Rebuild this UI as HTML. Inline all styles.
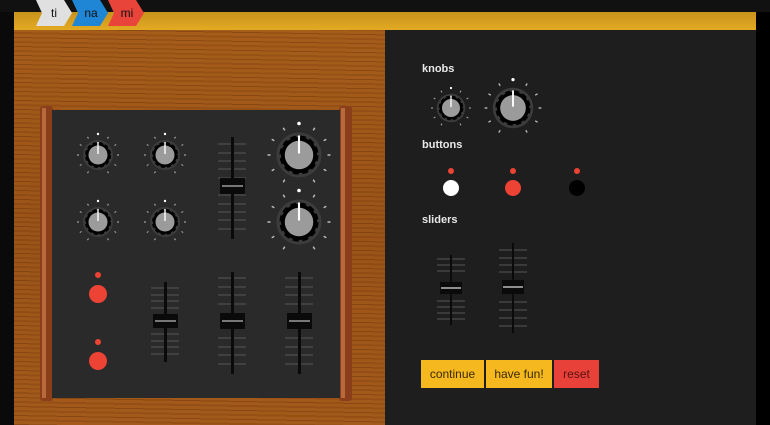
<!DOCTYPE html>
<html><head><style>
body{margin:0;width:770px;height:425px;overflow:hidden;background:#111;font-family:"Liberation Sans",sans-serif;position:relative}
.wood{position:absolute;left:14px;top:30px;width:371px;height:395px;background:
repeating-linear-gradient(1deg,rgba(70,25,0,.28) 0 1px,transparent 1px 4px,rgba(90,35,5,.18) 4px 6px,transparent 6px 9px),
linear-gradient(180deg,#a65d1a,#9a5318 50%,#a35a1a)}
.dark{position:absolute;left:385px;top:30px;width:371px;height:395px;background:#1e1e1e}
.yb{position:absolute;left:14px;top:12px;width:742px;height:18px;background:linear-gradient(180deg,#c8921c,#e3aa22)}
.lab{position:absolute;color:#e8e8e8;font-size:11px;font-weight:bold}
.btn{position:absolute;top:360px;height:28px;font-size:12px;color:#3a2a05;display:flex;align-items:center;justify-content:center}
</style></head><body>
<div class="yb"></div>
<div class="wood"></div>
<div class="dark"></div>
<svg width="770" height="425" style="position:absolute;left:0;top:0">
<defs>
<g id="k">
<circle r="15" fill="#3c3c3c"/>
<circle r="12" fill="#000"/>
<circle r="12.3" fill="none" stroke="#000" stroke-width="1.5" stroke-dasharray="4 2.5"/>
<circle r="9.5" fill="#9b9b9b"/>
<line x1="0" y1="-1" x2="0" y2="-13" stroke="#fff" stroke-width="1.4"/>
<circle cy="-21" r="1.2" fill="#fff"/>
<g stroke="#bbb" stroke-width="1">
<line y1="-19" y2="-21" transform="rotate(30)"/><line y1="-19" y2="-21" transform="rotate(60)"/><line y1="-19" y2="-21" transform="rotate(90)"/><line y1="-19" y2="-21" transform="rotate(120)"/><line y1="-19" y2="-21" transform="rotate(150)"/>
<line y1="-19" y2="-21" transform="rotate(-30)"/><line y1="-19" y2="-21" transform="rotate(-60)"/><line y1="-19" y2="-21" transform="rotate(-90)"/><line y1="-19" y2="-21" transform="rotate(-120)"/><line y1="-19" y2="-21" transform="rotate(-150)"/>
</g></g>
</defs>
<!-- tabs -->
<polygon points="36,0 64,0 72,13 64,26 36,26 42,13" fill="#e0e0e0"/>
<polygon points="72,0 100,0 108,13 100,26 72,26 78,13" fill="#1f86d6"/>
<polygon points="108,0 136,0 144,13 136,26 108,26 114,13" fill="#e8443a"/>
<text x="54" y="17" font-size="12" text-anchor="middle" fill="#111" font-family="Liberation Sans">ti</text>
<text x="91" y="17" font-size="12" text-anchor="middle" fill="#111" font-family="Liberation Sans">na</text>
<text x="127" y="17" font-size="12" text-anchor="middle" fill="#111" font-family="Liberation Sans">mi</text>
<!-- mixer -->
<rect x="40" y="106" width="13" height="295" rx="3" fill="#8a3f1a"/>
<rect x="339" y="106" width="13" height="295" rx="3" fill="#8a3f1a"/>
<rect x="42" y="108" width="4" height="290" fill="#b86a3c"/>
<rect x="341" y="108" width="4" height="290" fill="#b86a3c"/>
<rect x="52" y="110" width="288" height="288" fill="#2a2a2a"/>
<use href="#k" x="98" y="155"/><use href="#k" x="165" y="155"/>
<use href="#k" x="98" y="222"/><use href="#k" x="165" y="222"/>
<use href="#k" transform="translate(299,155) scale(1.5)"/>
<use href="#k" transform="translate(299,222) scale(1.5)"/>
<g stroke="#555" stroke-width="1">
<path d="M218 144h28M218 153h28M218 161h28M218 169h28M218 178h28M218 195h28M218 204h28M218 212h28M218 220h28M218 229h28"/>
<path d="M151 288h28M151 295h28M151 301h28M151 308h28M151 334h28M151 341h28M151 347h28M151 354h28"/>
<path d="M218 278h28M218 287h28M218 295h28M218 304h28M218 338h28M218 347h28M218 355h28M218 364h28"/>
<path d="M285 278h28M285 287h28M285 295h28M285 304h28M285 338h28M285 347h28M285 355h28M285 364h28"/>
</g>
<g fill="#0a0a0a">
<rect x="231" y="137" width="3" height="102"/><rect x="220" y="178" width="25" height="16"/>
<rect x="164" y="282" width="3" height="80"/><rect x="153" y="314" width="25" height="14"/>
<rect x="231" y="272" width="3" height="102"/><rect x="220" y="313" width="25" height="16"/>
<rect x="298" y="272" width="3" height="102"/><rect x="287" y="313" width="25" height="16"/>
</g>
<g stroke="#bbb" stroke-width="1.2"><path d="M222 186h21M155 321h21M222 321h21M289 321h21"/></g>
<g fill="#ec4335"><circle cx="98" cy="275" r="3"/><circle cx="98" cy="294" r="9"/><circle cx="98" cy="342" r="3"/><circle cx="98" cy="361" r="9"/></g>
<!-- right -->
<use href="#k" transform="translate(451,108) scale(0.95)"/>
<use href="#k" transform="translate(513,108) scale(1.35)"/>
<g fill="#ec4335"><circle cx="451" cy="171" r="3"/><circle cx="513" cy="171" r="3"/><circle cx="577" cy="171" r="3"/><circle cx="513" cy="188" r="8"/></g>
<circle cx="451" cy="188" r="8" fill="#fff"/><circle cx="577" cy="188" r="8" fill="#000"/>
<g stroke="#555" stroke-width="1">
<path d="M437 259h28M437 265h28M437 271h28M437 301h28M437 307h28M437 313h28M437 319h28"/>
<path d="M499 250h28M499 258h28M499 265h28M499 272h28M499 302h28M499 310h28M499 318h28M499 326h28"/>
</g>
<g fill="#0a0a0a"><rect x="450" y="255" width="2" height="70"/><rect x="440" y="282" width="22" height="12"/>
<rect x="512" y="243" width="2" height="90"/><rect x="502" y="280" width="22" height="14"/></g>
<g stroke="#ddd" stroke-width="1.2"><path d="M441 288h20M503 287h20"/></g>
<rect x="756" y="12" width="14" height="413" fill="#000"/>
<rect x="0" y="12" width="14" height="413" fill="#0a0a0a"/>
</svg>
<div class="lab" style="left:422px;top:63px">knobs</div>
<div class="lab" style="left:422px;top:139px">buttons</div>
<div class="lab" style="left:422px;top:214px">sliders</div>
<div class="btn" style="left:421px;width:63px;background:#f5b81e">continue</div>
<div class="btn" style="left:486px;width:66px;background:#f5b81e">have fun!</div>
<div class="btn" style="left:554px;width:45px;background:#e8413a;color:#5a1010">reset</div>
</body></html>
